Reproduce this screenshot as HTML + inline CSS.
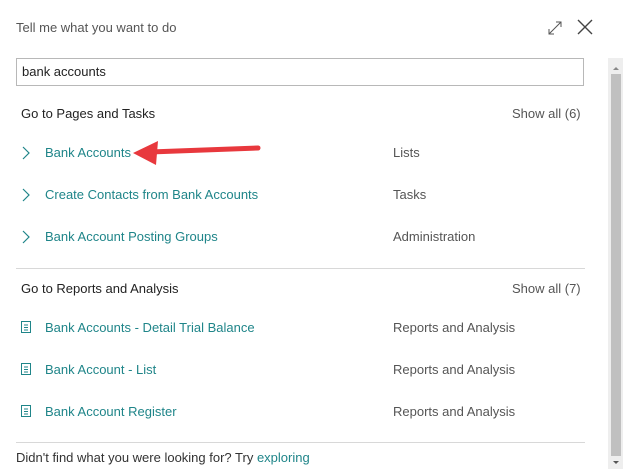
<!DOCTYPE html><html><head><style>
body{margin:0;width:624px;height:469px;background:#fff;font-family:"Liberation Sans",sans-serif;font-size:13px;color:#333;position:relative;overflow:hidden}
.a{position:absolute;white-space:nowrap}
.t{color:#1f8589}
.g{color:#555}
.ln{position:absolute;height:1px;background:#d8d8d8;left:16px;width:569px}
</style></head><body>
<div class="a g" style="left:16px;top:20px">Tell me what you want to do</div>
<svg class="a" style="left:546px;top:19px" width="18" height="18" viewBox="0 0 18 18" fill="none" stroke="#555" stroke-width="1"><path d="M3 15L15 3M10 3h5v5M3 10v5h5"/></svg>
<svg class="a" style="left:576px;top:18px" width="18" height="18" viewBox="0 0 18 18" stroke="#444" stroke-width="1.4"><path d="M2 2L16 16M16 2L2 16"/></svg>
<div class="a" style="left:16px;top:58px;width:566px;height:26px;border:1px solid #b8b8b8"></div>
<div class="a" style="left:22px;top:64px;color:#222">bank accounts</div>
<div class="a" style="left:608px;top:58px;width:15px;height:411px;background:#eee"></div>
<div class="a" style="left:611px;top:74px;width:10px;height:382px;background:#c0c0c0"></div>
<div class="a" style="left:613px;top:64px;width:0;height:0;border:3px solid transparent;border-bottom:3px solid #888"></div>
<div class="a" style="left:613px;top:461px;border:3px solid transparent;border-top:3px solid #555"></div>
<div class="a" style="left:21px;top:106px;color:#222">Go to Pages and Tasks</div>
<div class="a g" style="left:512px;top:106px">Show all (6)</div>
<svg class="a" style="left:21px;top:146px" width="10" height="14"><path d="M2 1l6 6-6 6" fill="none" stroke="#1f8589" stroke-width="1.2"/></svg>
<div class="a t" style="left:45px;top:145px">Bank Accounts</div>
<div class="a g" style="left:393px;top:145px">Lists</div>
<svg class="a" style="left:130px;top:138px" width="136" height="30"><path d="M20 14L128 10" stroke="#e8383d" stroke-width="5" stroke-linecap="round"/><path d="M3 15L28 3L26 27Z" fill="#e8383d"/></svg>
<svg class="a" style="left:21px;top:188px" width="10" height="14"><path d="M2 1l6 6-6 6" fill="none" stroke="#1f8589" stroke-width="1.2"/></svg>
<div class="a t" style="left:45px;top:187px">Create Contacts from Bank Accounts</div>
<div class="a g" style="left:393px;top:187px">Tasks</div>
<svg class="a" style="left:21px;top:230px" width="10" height="14"><path d="M2 1l6 6-6 6" fill="none" stroke="#1f8589" stroke-width="1.2"/></svg>
<div class="a t" style="left:45px;top:229px">Bank Account Posting Groups</div>
<div class="a g" style="left:393px;top:229px">Administration</div>
<div class="ln" style="top:268px"></div>
<div class="a" style="left:21px;top:281px;color:#222">Go to Reports and Analysis</div>
<div class="a g" style="left:512px;top:281px">Show all (7)</div>
<svg class="a" style="left:20px;top:320px" width="12" height="14"><rect x="1.5" y="1.5" width="9" height="11" fill="none" stroke="#1f8589"/><path d="M4 5h4M4 7.5h4M4 10h4" stroke="#1f8589"/></svg>
<div class="a t" style="left:45px;top:320px">Bank Accounts - Detail Trial Balance</div>
<div class="a g" style="left:393px;top:320px">Reports and Analysis</div>
<svg class="a" style="left:20px;top:362px" width="12" height="14"><rect x="1.5" y="1.5" width="9" height="11" fill="none" stroke="#1f8589"/><path d="M4 5h4M4 7.5h4M4 10h4" stroke="#1f8589"/></svg>
<div class="a t" style="left:45px;top:362px">Bank Account - List</div>
<div class="a g" style="left:393px;top:362px">Reports and Analysis</div>
<svg class="a" style="left:20px;top:404px" width="12" height="14"><rect x="1.5" y="1.5" width="9" height="11" fill="none" stroke="#1f8589"/><path d="M4 5h4M4 7.5h4M4 10h4" stroke="#1f8589"/></svg>
<div class="a t" style="left:45px;top:404px">Bank Account Register</div>
<div class="a g" style="left:393px;top:404px">Reports and Analysis</div>
<div class="ln" style="top:442px"></div>
<div class="a" style="left:16px;top:450px;color:#333">Didn't find what you were looking for? Try <span class="t">exploring</span></div>
</body></html>
